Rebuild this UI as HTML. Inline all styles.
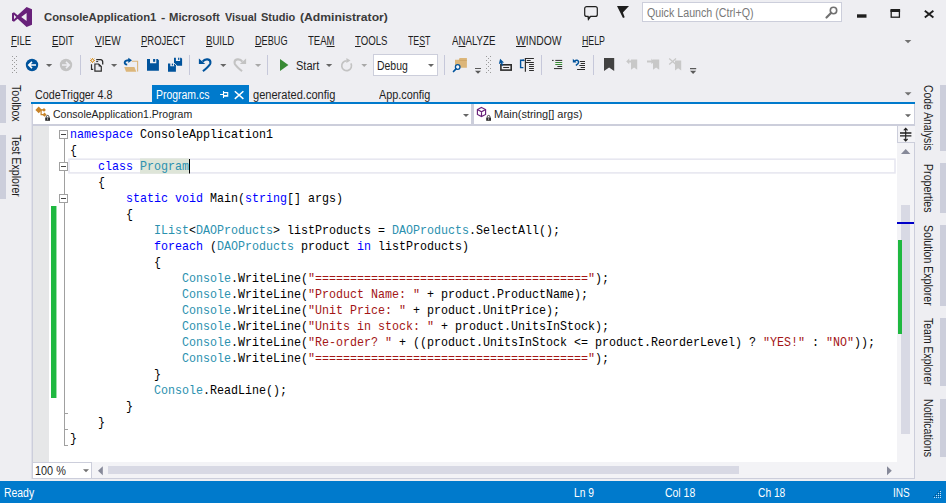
<!DOCTYPE html>
<html><head><meta charset="utf-8"><title>ConsoleApplication1 - Microsoft Visual Studio</title>
<style>
*{box-sizing:border-box;margin:0;padding:0}
html,body{width:946px;height:503px;overflow:hidden;background:#EEEEF2;font-family:"Liberation Sans",sans-serif;}
body{position:relative;color:#1e1e1e}
.a{position:absolute}
.t,.vt{position:absolute;white-space:nowrap;line-height:1;transform-origin:0 0}
.t u{text-decoration:underline;text-decoration-thickness:1px;text-underline-offset:0.5px}
#code{position:absolute;left:70px;top:127px;font-family:"Liberation Mono",monospace;font-size:13px;line-height:16px;white-space:pre;color:#000;transform-origin:0 0;transform:scaleX(0.8973)}
.k{color:#0000ff}.ty{color:#2b91af}.s{color:#a31515}
svg{position:absolute;overflow:visible}
</style></head><body>
<!-- ===== boxes / backgrounds ===== -->
<!-- quick launch -->
<div class="a" style="left:642px;top:2px;width:200px;height:20px;background:#fff;border:1px solid #CCCEDB"></div>
<!-- debug combo -->
<div class="a" style="left:373px;top:54px;width:65px;height:22px;background:#fff;border:1px solid #CCCEDB"></div>
<!-- toolbar separators -->
<div class="a" style="left:80px;top:55px;width:1px;height:20px;background:#C6C8DA"></div>
<div class="a" style="left:189px;top:55px;width:1px;height:20px;background:#C6C8DA"></div>
<div class="a" style="left:267px;top:55px;width:1px;height:20px;background:#C6C8DA"></div>
<div class="a" style="left:444px;top:55px;width:1px;height:20px;background:#C6C8DA"></div>
<div class="a" style="left:541px;top:55px;width:1px;height:20px;background:#C6C8DA"></div>
<div class="a" style="left:593px;top:55px;width:1px;height:20px;background:#C6C8DA"></div>
<!-- left autohide bars -->
<div class="a" style="left:0;top:85px;width:6px;height:38px;background:#CCCEDB"></div>
<div class="a" style="left:0;top:135px;width:6px;height:64px;background:#CCCEDB"></div>
<!-- right autohide bars -->
<div class="a" style="left:940px;top:85px;width:6px;height:66px;background:#CCCEDB"></div>
<div class="a" style="left:940px;top:163px;width:6px;height:50px;background:#CCCEDB"></div>
<div class="a" style="left:940px;top:225px;width:6px;height:81px;background:#CCCEDB"></div>
<div class="a" style="left:940px;top:318px;width:6px;height:68px;background:#CCCEDB"></div>
<div class="a" style="left:940px;top:399px;width:6px;height:58px;background:#CCCEDB"></div>
<!-- active tab + blue line -->
<div class="a" style="left:152px;top:85px;width:97px;height:18px;background:#007ACC"></div>
<div class="a" style="left:31px;top:102px;width:884px;height:2px;background:#007ACC"></div>
<!-- nav bar -->
<div class="a" style="left:31px;top:104px;width:1px;height:375px;background:#DFE0E9"></div>
<div class="a" style="left:32px;top:104px;width:883px;height:22px;background:#CCCEDB"></div>
<div class="a" style="left:33px;top:104px;width:438px;height:20px;background:#fff"></div>
<div class="a" style="left:474px;top:104px;width:440px;height:20px;background:#fff"></div>
<!-- editor frame -->
<div class="a" style="left:32px;top:126px;width:883px;height:353px;background:#CCCEDB"></div>
<div class="a" style="left:33px;top:126px;width:881px;height:352px;background:#F3F3F6"></div>
<div class="a" style="left:33px;top:126px;width:864px;height:336px;background:#fff"></div>
<div class="a" style="left:33px;top:126px;width:16px;height:336px;background:#E6E7E8"></div>
<!-- green change bars -->
<div class="a" style="left:51px;top:206px;width:5px;height:192px;background:#1FB840"></div>
<div class="a" style="left:56px;top:206px;width:1px;height:192px;background:#1FB840;opacity:.45"></div>
<!-- current line highlight -->
<svg class="a" style="left:0;top:0" width="946" height="503"><rect x="69" y="159.2" width="826" height="13.7" fill="#fff" stroke="#E7E7F0" stroke-width="1.6"/><rect x="140" y="158.4" width="48.8" height="15.3" fill="#DEE5D8"/><rect x="189" y="159" width="1" height="14.5" fill="#000"/></svg>
<!-- split handle -->
<div class="a" style="left:897px;top:126px;width:18px;height:17px;background:#F3F3F6;border-left:1px solid #CCCEDB;border-bottom:1px solid #CCCEDB"></div>
<!-- vscroll thumb and marks -->
<div class="a" style="left:901px;top:205px;width:9px;height:229px;background:#D8D9E4"></div>
<div class="a" style="left:898px;top:240px;width:4px;height:94px;background:#1FB840"></div>
<div class="a" style="left:897px;top:222px;width:17px;height:2px;background:#0000C8"></div>
<!-- zoom combo -->
<div class="a" style="left:32px;top:462px;width:60px;height:17px;background:#fff;border:1px solid #CCCEDB"></div>
<!-- hscroll thumb -->
<div class="a" style="left:108px;top:466px;width:631px;height:8px;background:#D8D9E4"></div>
<!-- status bar -->
<div class="a" style="left:0;top:481px;width:946px;height:22px;background:#007ACC"></div>

<!-- ===== code ===== -->
<div id="code"><span class="k">namespace</span> ConsoleApplication1
{
    <span class="k">class</span> <span class="ty">Program</span>
    {
        <span class="k">static</span> <span class="k">void</span> Main(<span class="k">string</span>[] args)
        {
            <span class="ty">IList</span>&lt;<span class="ty">DAOProducts</span>&gt; listProducts = <span class="ty">DAOProducts</span>.SelectAll();
            <span class="k">foreach</span> (<span class="ty">DAOProducts</span> product <span class="k">in</span> listProducts)
            {
                <span class="ty">Console</span>.WriteLine(<span class="s">"======================================="</span>);
                <span class="ty">Console</span>.WriteLine(<span class="s">"Product Name: "</span> + product.ProductName);
                <span class="ty">Console</span>.WriteLine(<span class="s">"Unit Price: "</span> + product.UnitPrice);
                <span class="ty">Console</span>.WriteLine(<span class="s">"Units in stock: "</span> + product.UnitsInStock);
                <span class="ty">Console</span>.WriteLine(<span class="s">"Re-order? "</span> + ((product.UnitsInStock &lt;= product.ReorderLevel) ? <span class="s">"YES!"</span> : <span class="s">"NO"</span>));
                <span class="ty">Console</span>.WriteLine(<span class="s">"======================================="</span>);
            }
            <span class="ty">Console</span>.ReadLine();
        }
    }
}</div>

<!-- ===== icons (page coordinates) ===== -->
<svg class="a" style="left:0;top:0" width="946" height="503" viewBox="0 0 946 503">
<defs>
<pattern id="grip" x="0" y="0" width="4" height="4" patternUnits="userSpaceOnUse"><rect x="0" y="0" width="1" height="1" fill="#9a9a9a"/><rect x="2" y="2" width="1" height="1" fill="#9a9a9a"/></pattern>
<pattern id="grip2" x="2" y="0" width="4" height="4" patternUnits="userSpaceOnUse"><rect x="0" y="0" width="1" height="1" fill="#9a9a9a"/><rect x="2" y="2" width="1" height="1" fill="#9a9a9a"/></pattern>
</defs>
<!-- VS logo -->
<path fill="#68217A" fill-rule="evenodd" d="M26.6 7 L32 9.2 L32 24.8 L26.6 27 L17.6 18.8 L14 21.8 L12 20.8 L12 13.2 L14 12.2 L17.6 15.2 Z M26.6 13 L21.2 17 L26.6 21 Z M14 14.8 L16.3 17 L14 19.2 Z"/>
<!-- feedback -->
<path d="M586.7 6.6 H595.3 a2 2 0 0 1 2 2 V14.4 a2 2 0 0 1 -2 2 H590.6 L588.4 19.4 L588 16.4 H586.7 a2 2 0 0 1 -2 -2 V8.6 a2 2 0 0 1 2 -2 Z" fill="none" stroke="#1e1e1e" stroke-width="1.2"/>
<path d="M588 16.4 H590.6 L588.4 19.4 Z" fill="#1e1e1e"/>
<!-- filter -->
<path d="M617 6 H629 L622.9 12.6 L624.7 17.3 L623 18 Z" fill="#1e1e1e"/>
<!-- quick launch magnifier -->
<circle cx="833.5" cy="10.5" r="3.2" fill="none" stroke="#717171" stroke-width="1.6"/>
<path d="M831 13 L826.5 17.5" stroke="#717171" stroke-width="2.2" stroke-linecap="round"/>
<!-- window buttons -->
<rect x="857" y="14.3" width="9.5" height="3.4" fill="#1e1e1e"/>
<rect x="891.2" y="10.5" width="8.2" height="6.7" fill="none" stroke="#1e1e1e" stroke-width="1.3"/><rect x="890.5" y="9" width="9.6" height="3" fill="#1e1e1e"/>
<path d="M924.8 10.8 L933.4 17.5 M933.4 10.8 L924.8 17.5" stroke="#1e1e1e" stroke-width="1.9"/>
<!-- menu overflow arrow -->
<path d="M904.7 40 H911.3 L908 43.3 Z" fill="#717171"/>

<!-- toolbar grips -->
<rect x="12" y="56" width="5" height="18" fill="url(#grip)"/>
<rect x="486" y="56" width="5" height="18" fill="url(#grip2)"/>
<!-- back -->
<circle cx="32" cy="65" r="6.2" fill="#00539C"/>
<path d="M36 65 H29 M32 61.9 L28.8 65 L32 68.1" fill="none" stroke="#fff" stroke-width="1.6"/>
<path d="M46 64 H52.2 L49.1 67.1 Z" fill="#666"/>
<!-- forward (disabled) -->
<circle cx="66" cy="65" r="6.2" fill="#C3C3C3"/>
<path d="M62 65 H69 M66 61.9 L69.2 65 L66 68.1" fill="none" stroke="#EEEEF2" stroke-width="1.6"/>
<!-- new project -->
<g>
<path d="M90 60.5 H95 M92.5 58 V63 M90.6 58.6 L94.4 62.4 M94.4 58.6 L90.6 62.4" stroke="#D8901E" stroke-width="0.9"/>
<circle cx="92.5" cy="60.5" r="0.9" fill="#EEEEF2"/>
<path d="M96.2 59.6 H100.6 Q102.7 59.8 102.7 62 V64.4" fill="none" stroke="#2d2d2d" stroke-width="1.3"/>
<path d="M96.2 61.6 H98.2" stroke="#2d2d2d" stroke-width="1"/>
<path d="M91.5 64.3 V69.3 H93.2" fill="none" stroke="#2d2d2d" stroke-width="1.2"/>
<path d="M94.9 64 H98.6 L101.3 66.6 V71.1 H94.9 Z" fill="#ECECF0" stroke="#2d2d2d" stroke-width="1.2"/>
<path d="M98.6 64 V66.6 H101.3 Z" fill="#2d2d2d"/>
</g>
<path d="M111 64 H117.2 L114.1 67.1 Z" fill="#666"/>
<!-- open -->
<g>
<path d="M131.8 61.3 H137.6 V71.6" fill="none" stroke="#DCB67A" stroke-width="1.1"/>
<path d="M124.3 67 H134.4 L136.3 71.8 H126 Z" fill="#DCB67A"/>
<path d="M127.2 64.6 C123.4 64.4 123.8 60.2 129 60.3" fill="none" stroke="#00539C" stroke-width="1.9"/>
<path d="M128.3 57.7 L132 60.3 L128.3 62.9 Z" fill="#00539C"/>
</g>
<!-- save -->
<path d="M147 59 H157.6 L158.9 60.3 V70.7 H147 Z M150 59 V63.3 H156.3 V59 Z" fill="#00539C" fill-rule="evenodd"/>
<rect x="153.1" y="59" width="2.1" height="2.8" fill="#00539C"/>
<!-- save all -->
<g fill="#00539C" fill-rule="evenodd">
<path d="M174 57.7 H181.1 L182.1 58.7 V65.7 H174 Z M175.9 57.7 V61 H180.1 V57.7 Z"/>
<rect x="178.1" y="57.7" width="1.2" height="2.2"/>
<path d="M168 63.6 H175 L175.9 64.5 V71.8 H168 Z M170.3 63.6 V66.2 H174.4 V63.6 Z"/>
<rect x="171.8" y="63.6" width="1.3" height="1.8"/>
</g>
<path d="M174 62.9 L177.2 66.2" stroke="#EEEEF2" stroke-width="0.9"/>
<!-- undo -->
<path d="M202.6 61.6 C205 58.2 211 58.6 210.4 63.2 C210 65.8 206 68.6 203 71.2" fill="none" stroke="#00539C" stroke-width="2.1"/>
<path d="M198.9 58.5 V64 H205.2 Z" fill="#00539C"/>
<path d="M220.2 64 H226.4 L223.3 67.1 Z" fill="#666"/>
<!-- redo disabled -->
<path d="M242.4 61.6 C240 58.2 234 58.6 234.6 63.2 C235 65.8 239 68.6 242 71.2" fill="none" stroke="#C3C3C3" stroke-width="2.1"/>
<path d="M246.1 58.5 V64 H239.8 Z" fill="#C3C3C3"/>
<path d="M255 64 H261.2 L258.1 67.1 Z" fill="#A8A8A8"/>
<!-- start -->
<path d="M280 59 L288.4 65 L280 71 Z" fill="#388A34"/>
<path d="M326 64 H332.2 L329.1 67.1 Z" fill="#666"/>
<!-- refresh disabled -->
<path d="M350.9 63.4 A4.9 4.9 0 1 1 346.6 60.9" fill="none" stroke="#C3C3C3" stroke-width="1.7"/>
<path d="M346.4 58.1 L350.5 60.6 L346.4 63.1 Z" fill="#C3C3C3"/>
<path d="M361.3 64 H367.2 L364.2 67 Z" fill="#A8A8A8"/>
<!-- debug combo arrow -->
<path d="M428 64 H434 L431 67 Z" fill="#666"/>
<!-- find in files -->
<g>
<path d="M455 59.8 H458.8 L459.6 58 H466.9 V67.7 H455 Z" fill="#DCB67A"/>
<path d="M459.4 60.4 H466.9" stroke="#C79F5E" stroke-width="0.7"/>
<circle cx="457.7" cy="67" r="2.3" fill="#F6F6F8" stroke="#00539C" stroke-width="1.3"/>
<path d="M456 68.9 L453.5 71.5" stroke="#00539C" stroke-width="1.7" stroke-linecap="round"/>
</g>
<!-- overflow -->
<path d="M475 68 H481 V69.1 H475 Z M475 70.7 H481 L478 73.8 Z" fill="#5a5a5a"/>
<path d="M690 68.1 H696.2 V69.2 H690 Z M690 70.7 H696.2 L693.1 73.9 Z" fill="#5a5a5a"/>
<!-- icon: cursor + box -->
<g>
<rect x="500.9" y="64.8" width="10.3" height="5.3" fill="none" stroke="#2d2d2d" stroke-width="1.6"/>
<path d="M503.2 67.5 H509.1" stroke="#2d2d2d" stroke-width="1"/>
<path d="M500.1 58.8 L498.9 63.9 L500.9 63.2 L502 65.8 L503.2 65.3 L502.2 62.8 L504 62.4 Z" fill="#00539C"/>
</g>
<!-- icon: bracket + lines -->
<g>
<path d="M523.4 60.3 H520.6 V67.6 H523.4" fill="none" stroke="#00539C" stroke-width="1.4"/>
<path d="M522.8 58.9 L525.2 60.2 L522.8 61.5 Z" fill="#00539C"/>
<path d="M525.4 58 V71.7 M525.4 58.5 H533.9 M525.4 62.5 H533.9" stroke="#2d2d2d" stroke-width="1.2" fill="none"/>
<path d="M526.8 60.5 H530.7 M529.1 64.5 H533.9 M529.1 66.5 H533.9 M529.1 68.5 H533.9 M529.1 70.5 H533.9" stroke="#2d2d2d" stroke-width="1"/>
</g>
<!-- icon: indent lines -->
<g>
<path d="M552 60.4 H553.6 M555.3 60.4 H562.2 M557.4 66.5 H562.2 M554 68.6 H562.2" stroke="#2d2d2d" stroke-width="1"/>
<path d="M555.3 62.5 H562.2 M555.3 64.5 H562.2" stroke="#388A34" stroke-width="1.1"/>
</g>
<!-- icon: uncomment -->
<g>
<path d="M574.6 61.2 C576.2 59.6 578.6 60.2 578.6 62.2 C578.6 63.8 577 64.6 575.8 65.4" fill="none" stroke="#00539C" stroke-width="1.5"/>
<path d="M572.8 58.8 V62.6 H576.6 Z" fill="#00539C"/>
<path d="M579.8 61.5 H585 M580.7 63.5 H585 M579.4 65.5 H585 M580.7 67.5 H585 M577.1 69.5 H585" stroke="#2d2d2d" stroke-width="1"/>
</g>
<!-- bookmark -->
<path d="M604 58 H614.2 V70.9 L609.1 67.6 L604 70.9 Z" fill="#424242"/>
<!-- prev bookmark (disabled) -->
<g fill="#C8C8C8" stroke="none">
<path d="M631 59.6 H637.2 V69.8 L634.1 67.4 L631 69.8 Z"/>
<path d="M626.2 61.4 L629.2 58.6 V60.6 H633 V62.4 H629.2 V64.2 Z"/>
</g>
<!-- next bookmark (disabled) -->
<g fill="#C8C8C8">
<path d="M653 59.6 H659.2 V69.8 L656.1 67.4 L653 69.8 Z"/>
<path d="M654.4 61.4 L651.4 58.6 V60.6 H647 V62.4 H651.4 V64.2 Z"/>
</g>
<!-- clear bookmark (disabled) -->
<g>
<path d="M675 60.4 H681.2 V70.6 L678.1 68.2 L675 70.6 Z" fill="#C8C8C8"/>
<path d="M669.2 58.6 L676 64.6 M676 58.6 L669.2 64.6" stroke="#C8C8C8" stroke-width="1.3"/>
</g>

<!-- tab pin + close -->
<path d="M220.1 94.5 H223.2 M223.5 91 V98 M223.5 92.6 H227.7 V96.3 H223.5 M223.5 95.6 H227.7" fill="none" stroke="#fff" stroke-width="1.1"/>
<path d="M234.8 91.2 L243.4 98.9 M243.4 91.2 L234.8 98.9" stroke="#fff" stroke-width="1.5"/>
<!-- tab overflow arrow -->
<path d="M904.7 92.2 H911.5 L908.1 95.6 Z" fill="#717171"/>
<!-- nav icons -->
<g fill="#C8842A">
<path d="M38.7 106.6 L42 109.9 L38.7 113.2 L35.4 109.9 Z"/>
<path d="M44 108 L45.9 109.9 L44 111.8 L42.1 109.9 Z"/>
<path d="M44.5 112.6 L46.6 114.7 L44.5 116.8 L42.4 114.7 Z"/>
<path d="M40 109.9 H44 M41.1 110 V114.7 H44.5" stroke="#C8842A" stroke-width="1.2" fill="none"/>
</g>
<rect x="45.2" y="117.5" width="4.8" height="3.3" fill="#2d2d2d"/><path d="M46.3 117.5 V116.7 a1.3 1.3 0 0 1 2.6 0 V117.5" fill="none" stroke="#2d2d2d" stroke-width="0.9"/><rect x="47.1" y="118.4" width="1" height="1.2" fill="#ddd"/>
<path d="M463 114 H469 L466 117.1 Z" fill="#666"/>
<g>
<path d="M481.5 107.5 L485.6 109.6 V114.4 L481.5 116.6 L477.4 114.4 V109.6 Z M477.4 109.6 L481.5 111.8 L485.6 109.6 M481.5 111.8 V116.6" fill="none" stroke="#68217A" stroke-width="1.15"/>
<rect x="486.2" y="117.5" width="4.8" height="3.3" fill="#2d2d2d"/><path d="M487.3 117.5 V116.7 a1.3 1.3 0 0 1 2.6 0 V117.5" fill="none" stroke="#2d2d2d" stroke-width="0.9"/><rect x="488.1" y="118.4" width="1" height="1.2" fill="#ddd"/>
</g>
<path d="M905 114.2 H911 L908 117.2 Z" fill="#666"/>

<!-- outlining -->
<g stroke="#A0A0A0" stroke-width="1" fill="none" shape-rendering="crispEdges">
<path d="M64.5 139 V445.5 H68"/>
<path d="M64.5 413.5 H68 M64.5 429.5 H68"/>
<rect x="59.5" y="130.5" width="8" height="8" fill="#fff"/>
<rect x="59.5" y="162.5" width="8" height="8" fill="#fff"/>
<rect x="59.5" y="194.5" width="8" height="8" fill="#fff"/>
</g>
<g stroke="#444" stroke-width="1" shape-rendering="crispEdges">
<path d="M61 134.5 H66 M61 166.5 H66 M61 198.5 H66"/>
</g>

<!-- split handle icon -->
<path d="M900 133 H911.4 M900 135.8 H911.4" fill="none" stroke="#1e1e1e" stroke-width="1.35"/><path d="M905.7 128.8 V140.6 M903.8 130.4 L905.7 128.4 L907.6 130.4 M903.8 139 L905.7 141 L907.6 139" fill="none" stroke="#1e1e1e" stroke-width="1.1"/>
<!-- vscroll up arrow -->
<path d="M901 154 H910.4 L905.7 149 Z" fill="#868999"/>
<!-- zoom combo arrow -->
<path d="M83 469.2 H89 L86 472.2 Z" fill="#717171"/>
<!-- hscroll arrows -->
<path d="M102.8 466.2 V475.2 L98 470.7 Z" fill="#868999"/>
<path d="M887 466.2 V475.2 L891.8 470.7 Z" fill="#868999"/>
<!-- status grip -->
<g shape-rendering="crispEdges"><rect x="933" y="496" width="1" height="1" fill="#00558F"/><rect x="934" y="497" width="1" height="1" fill="#C4DEF3"/><rect x="935" y="496" width="1" height="1" fill="#00558F"/><rect x="936" y="497" width="1" height="1" fill="#C4DEF3"/><rect x="937" y="496" width="1" height="1" fill="#00558F"/><rect x="938" y="497" width="1" height="1" fill="#C4DEF3"/><rect x="939" y="496" width="1" height="1" fill="#00558F"/><rect x="940" y="497" width="1" height="1" fill="#C4DEF3"/><rect x="935" y="494" width="1" height="1" fill="#00558F"/><rect x="936" y="495" width="1" height="1" fill="#C4DEF3"/><rect x="937" y="494" width="1" height="1" fill="#00558F"/><rect x="938" y="495" width="1" height="1" fill="#C4DEF3"/><rect x="939" y="494" width="1" height="1" fill="#00558F"/><rect x="940" y="495" width="1" height="1" fill="#C4DEF3"/><rect x="937" y="492" width="1" height="1" fill="#00558F"/><rect x="938" y="493" width="1" height="1" fill="#C4DEF3"/><rect x="939" y="492" width="1" height="1" fill="#00558F"/><rect x="940" y="493" width="1" height="1" fill="#C4DEF3"/><rect x="939" y="490" width="1" height="1" fill="#00558F"/><rect x="940" y="491" width="1" height="1" fill="#C4DEF3"/></g>
</svg>
<div class="t" id="t0" style="left:43.5px;top:11px;line-height:12px;font-size:11.5px;color:#3b3b3b;font-weight:bold;transform:scaleX(0.9827)">ConsoleApplication1</div>
<div class="t" id="t1" style="left:160.7px;top:11px;line-height:12px;font-size:11.5px;color:#3b3b3b;font-weight:bold;transform:scaleX(1.1187)">-</div>
<div class="t" id="t2" style="left:168.8px;top:11px;line-height:12px;font-size:11.5px;color:#3b3b3b;font-weight:bold;transform:scaleX(0.9797)">Microsoft</div>
<div class="t" id="t3" style="left:225px;top:11px;line-height:12px;font-size:11.5px;color:#3b3b3b;font-weight:bold;transform:scaleX(0.9414)">Visual</div>
<div class="t" id="t4" style="left:261.3px;top:11px;line-height:12px;font-size:11.5px;color:#3b3b3b;font-weight:bold;transform:scaleX(0.9586)">Studio</div>
<div class="t" id="t5" style="left:299.8px;top:11px;line-height:12px;font-size:11.5px;color:#3b3b3b;font-weight:bold;transform:scaleX(1.0582)">(Administrator)</div>
<div class="t" id="t6" style="left:10.8px;top:34px;line-height:14px;font-size:12px;color:#1e1e1e;;transform:scaleX(0.7965)"><u>F</u>ILE</div>
<div class="t" id="t7" style="left:51.9px;top:34px;line-height:14px;font-size:12px;color:#1e1e1e;;transform:scaleX(0.8041)"><u>E</u>DIT</div>
<div class="t" id="t8" style="left:94.7px;top:34px;line-height:14px;font-size:12px;color:#1e1e1e;;transform:scaleX(0.8375)"><u>V</u>IEW</div>
<div class="t" id="t9" style="left:140.8px;top:34px;line-height:14px;font-size:12px;color:#1e1e1e;;transform:scaleX(0.7891)"><u>P</u>ROJECT</div>
<div class="t" id="t10" style="left:205.6px;top:34px;line-height:14px;font-size:12px;color:#1e1e1e;;transform:scaleX(0.8004)"><u>B</u>UILD</div>
<div class="t" id="t11" style="left:254.8px;top:34px;line-height:14px;font-size:12px;color:#1e1e1e;;transform:scaleX(0.7613)"><u>D</u>EBUG</div>
<div class="t" id="t12" style="left:308.4px;top:34px;line-height:14px;font-size:12px;color:#1e1e1e;;transform:scaleX(0.7977)">TEA<u>M</u></div>
<div class="t" id="t13" style="left:355px;top:34px;line-height:14px;font-size:12px;color:#1e1e1e;;transform:scaleX(0.8003)"><u>T</u>OOLS</div>
<div class="t" id="t14" style="left:408px;top:34px;line-height:14px;font-size:12px;color:#1e1e1e;;transform:scaleX(0.7328)">TE<u>S</u>T</div>
<div class="t" id="t15" style="left:451.8px;top:34px;line-height:14px;font-size:12px;color:#1e1e1e;;transform:scaleX(0.8065)">A<u>N</u>ALYZE</div>
<div class="t" id="t16" style="left:515.7px;top:34px;line-height:14px;font-size:12px;color:#1e1e1e;;transform:scaleX(0.8641)"><u>W</u>INDOW</div>
<div class="t" id="t17" style="left:581.8px;top:34px;line-height:14px;font-size:12px;color:#1e1e1e;;transform:scaleX(0.7334)"><u>H</u>ELP</div>
<div class="t" id="t18" style="left:647px;top:6px;line-height:14px;font-size:12px;color:#787878;;transform:scaleX(0.8896)">Quick Launch (Ctrl+Q)</div>
<div class="t" id="t19" style="left:295.7px;top:59px;line-height:14px;font-size:12px;color:#1e1e1e;;transform:scaleX(0.9194)">Start</div>
<div class="t" id="t20" style="left:376.5px;top:59px;line-height:14px;font-size:12px;color:#1e1e1e;;transform:scaleX(0.8707)">Debug</div>
<div class="t" id="t21" style="left:34.7px;top:88px;line-height:14px;font-size:12px;color:#1e1e1e;;transform:scaleX(0.8971)">CodeTrigger 4.8</div>
<div class="t" id="t22" style="left:155.6px;top:88px;line-height:14px;font-size:12px;color:#fff;;transform:scaleX(0.8703)">Program.cs</div>
<div class="t" id="t23" style="left:252.7px;top:88px;line-height:14px;font-size:12px;color:#1e1e1e;;transform:scaleX(0.9216)">generated.config</div>
<div class="t" id="t24" style="left:379px;top:88px;line-height:14px;font-size:12px;color:#1e1e1e;;transform:scaleX(0.9045)">App.config</div>
<div class="t" id="t25" style="left:52.8px;top:108px;line-height:12px;font-size:11.5px;color:#1e1e1e;;transform:scaleX(0.9149)">ConsoleApplication1.Program</div>
<div class="t" id="t26" style="left:493.8px;top:108px;line-height:12px;font-size:11.5px;color:#1e1e1e;;transform:scaleX(0.9528)">Main(string[] args)</div>
<div class="t" id="t27" style="left:35.2px;top:464px;line-height:14px;font-size:12px;color:#1e1e1e;;transform:scaleX(0.9051)">100 %</div>
<div class="t" id="t28" style="left:3.7px;top:486px;line-height:14px;font-size:12px;color:#fff;;transform:scaleX(0.8677)">Ready</div>
<div class="t" id="t29" style="left:573.5px;top:486px;line-height:14px;font-size:12px;color:#fff;;transform:scaleX(0.8562)">Ln 9</div>
<div class="t" id="t30" style="left:665.3px;top:486px;line-height:14px;font-size:12px;color:#fff;;transform:scaleX(0.8706)">Col 18</div>
<div class="t" id="t31" style="left:758px;top:486px;line-height:14px;font-size:12px;color:#fff;;transform:scaleX(0.8523)">Ch 18</div>
<div class="t" id="t32" style="left:893.4px;top:486px;line-height:14px;font-size:12px;color:#fff;;transform:scaleX(0.8393)">INS</div>
<div class="vt" id="v0" style="left:21.76px;top:85.2px;font-size:12px;transform:rotate(90deg) scaleX(0.8870)">Toolbox</div>
<div class="vt" id="v1" style="left:21.76px;top:135.3px;font-size:12px;transform:rotate(90deg) scaleX(0.8839)">Test Explorer</div>
<div class="vt" id="v2" style="left:933.56px;top:85.3px;font-size:12px;transform:rotate(90deg) scaleX(0.8653)">Code Analysis</div>
<div class="vt" id="v3" style="left:933.56px;top:163.5px;font-size:12px;transform:rotate(90deg) scaleX(0.8866)">Properties</div>
<div class="vt" id="v4" style="left:933.56px;top:224.6px;font-size:12px;transform:rotate(90deg) scaleX(0.8830)">Solution Explorer</div>
<div class="vt" id="v5" style="left:933.56px;top:317.9px;font-size:12px;transform:rotate(90deg) scaleX(0.8724)">Team Explorer</div>
<div class="vt" id="v6" style="left:933.56px;top:398.5px;font-size:12px;transform:rotate(90deg) scaleX(0.8872)">Notifications</div>
</body></html>
